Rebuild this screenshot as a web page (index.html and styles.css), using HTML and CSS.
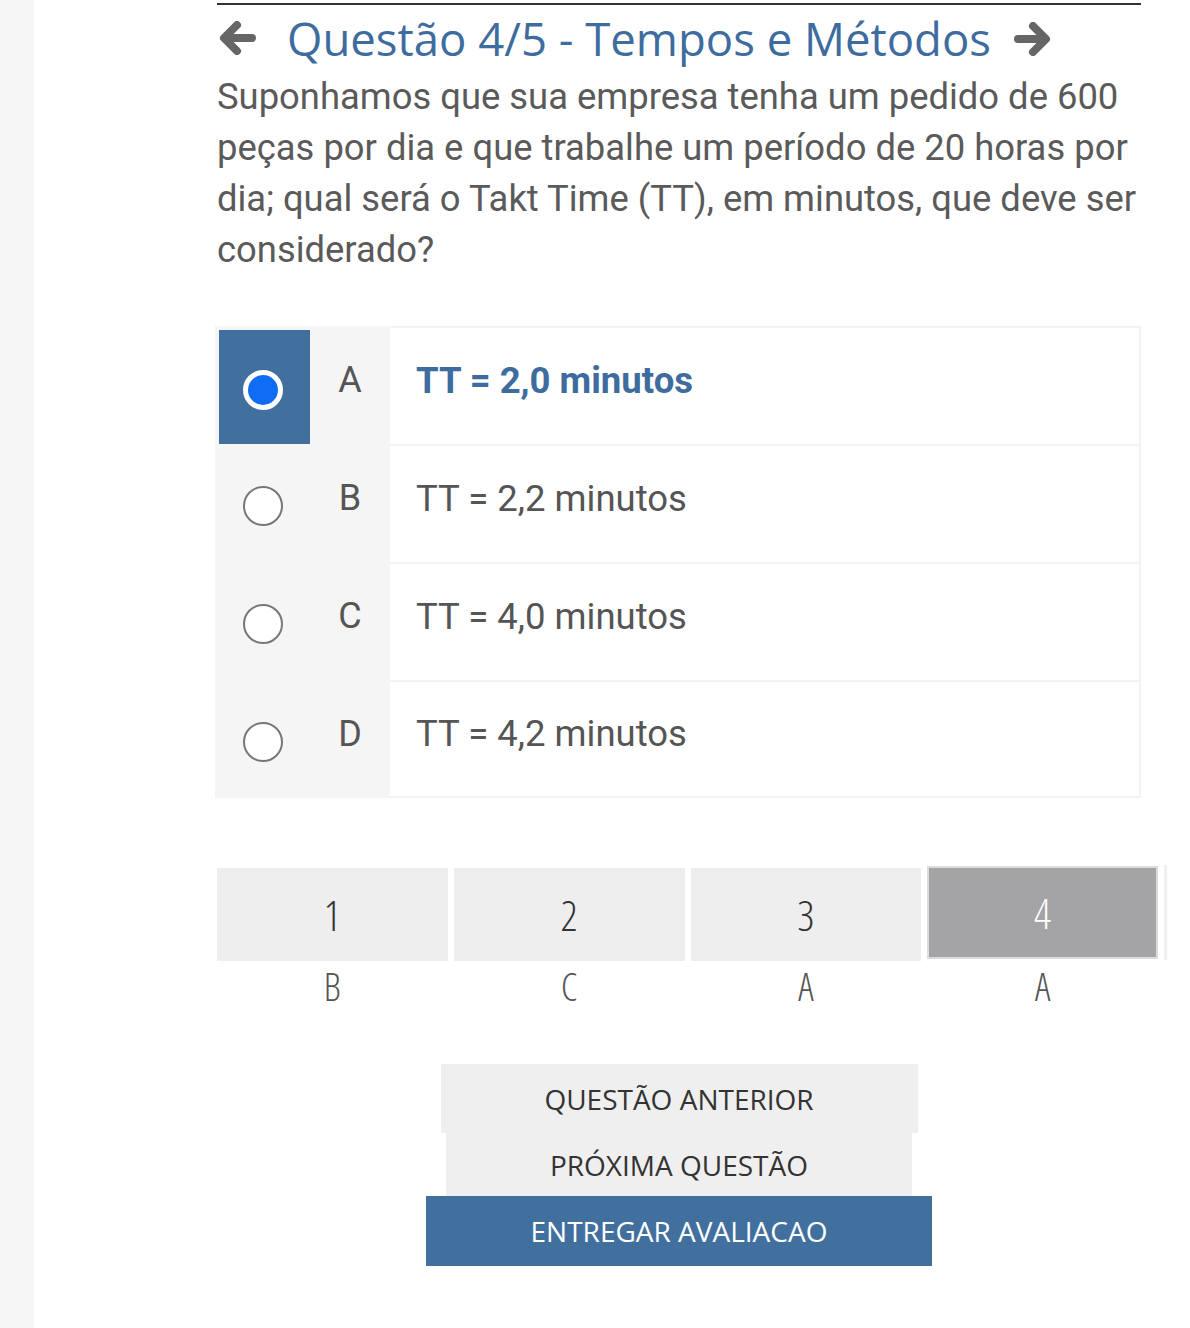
FILE: index.html
```html
<!DOCTYPE html>
<html lang="pt-BR">
<head>
<meta charset="utf-8">
<title>Questão 4/5</title>
<link rel="stylesheet" href="styles.css">
</head>
<body>
<div class="page">
  <aside class="sidebar"></aside>
  <main class="main">
    <div class="topline"></div>
    <header class="title-row">
      <svg class="arrow" viewBox="0 0 40 34" width="40" height="34" aria-hidden="true">
        <path d="M20 4 L7 17 L20 30 M8 17 H35" fill="none" stroke="#666" stroke-width="8" stroke-linecap="round" stroke-linejoin="round"/>
      </svg>
      <h1 class="title">Questão 4/5 - Tempos e Métodos</h1>
      <svg class="arrow" viewBox="0 0 40 34" width="40" height="34" aria-hidden="true">
        <path d="M20 4 L33 17 L20 30 M32 17 H5" fill="none" stroke="#666" stroke-width="8" stroke-linecap="round" stroke-linejoin="round"/>
      </svg>
    </header>
    <p class="question">Suponhamos que sua empresa tenha um pedido de 600 peças por dia e que trabalhe um período de 20 horas por dia; qual será o Takt Time (TT), em minutos, que deve ser considerado?</p>

    <div class="options">
      <div class="option selected">
        <div class="radio-cell"><span class="radio checked"></span></div>
        <div class="letter">A</div>
        <div class="answer">TT = 2,0 minutos</div>
      </div>
      <div class="option">
        <div class="radio-cell"><span class="radio"></span></div>
        <div class="letter">B</div>
        <div class="answer">TT = 2,2 minutos</div>
      </div>
      <div class="option">
        <div class="radio-cell"><span class="radio"></span></div>
        <div class="letter">C</div>
        <div class="answer">TT = 4,0 minutos</div>
      </div>
      <div class="option">
        <div class="radio-cell"><span class="radio"></span></div>
        <div class="letter">D</div>
        <div class="answer">TT = 4,2 minutos</div>
      </div>
    </div>

    <div class="nav-grid">
      <div class="nav-item"><div class="num">1</div><div class="ans">B</div></div>
      <div class="nav-item"><div class="num">2</div><div class="ans">C</div></div>
      <div class="nav-item"><div class="num">3</div><div class="ans">A</div></div>
      <div class="nav-item current"><div class="num">4</div><div class="ans">A</div></div>
      <div class="nav-edge"></div>
    </div>

    <div class="buttons">
      <button class="btn btn-prev">QUESTÃO ANTERIOR</button>
      <button class="btn btn-next">PRÓXIMA QUESTÃO</button>
      <button class="btn btn-submit">ENTREGAR AVALIACAO</button>
    </div>
  </main>
</div>
</body>
</html>
```

FILE: styles.css
```css
html, body {
  margin: 0;
  padding: 0;
  background: #ffffff;
}

.page {
  display: flex;
  min-height: 1328px;
}

.sidebar {
  width: 34px;
  flex: none;
  background: #f6f6f6;
}

.main {
  width: 924px;
  padding-left: 183px;
  font-family: Roboto, "Noto Sans", sans-serif;
}

.topline {
  margin-top: 3px;
  border-top: 2px solid #333;
}

.title-row {
  display: flex;
  align-items: center;
  height: 66px;
}

.arrow {
  flex: none;
}

.title-row .arrow:first-child {
  margin-right: 30px;
}

.title-row .arrow:last-child {
  margin-left: 22px;
  margin-top: 2px;
}

.title {
  margin: 0;
  font-family: "Open Sans", sans-serif;
  font-weight: 400;
  font-size: 45.5px;
  line-height: 66px;
  color: #3e6c9e;
  white-space: nowrap;
}

.question {
  margin: 0;
  font-size: 36.4px;
  line-height: 51px;
  color: #5a5a5a;
}

.options {
  margin-top: 51px;
  margin-left: -2px;
  width: 926px;
  background: #f5f5f5;
}

.option {
  display: flex;
  height: 118px;
}

.radio-cell {
  width: 95px;
  display: flex;
  align-items: center;
  justify-content: center;
  box-sizing: border-box;
  padding-top: 6px;
}

.option.selected .radio-cell {
  background: #41709f;
  margin: 4px 0 0 4px;
  width: 91px;
  padding-top: 6px;
  padding-right: 4px;
}

.radio {
  width: 40px;
  height: 40px;
  border-radius: 50%;
  box-sizing: border-box;
  border: 2px solid #777;
  background: #fff;
}

.radio.checked {
  border: 5px solid #fff;
  background: #0f6cf5;
}

.letter {
  width: 80px;
  display: flex;
  align-items: center;
  justify-content: center;
  font-size: 36px;
  color: #555;
  padding-bottom: 10px;
  box-sizing: border-box;
}

.answer {
  flex: 1;
  background: #fff;
  border-top: 2px solid #f3f3f3;
  border-right: 2px solid #f3f3f3;
  display: flex;
  align-items: center;
  padding-left: 26px;
  padding-bottom: 12px;
  font-size: 36.5px;
  color: #555;
}

.option:last-child .answer {
  border-bottom: 2px solid #f3f3f3;
}

.option.selected .answer {
  font-weight: 700;
  color: #3e6c9e;
}

.nav-grid {
  display: flex;
  gap: 6px;
  margin-top: 70px;
  width: 950px;
}

.nav-item {
  width: 231px;
  font-family: "Open Sans", sans-serif;
  font-stretch: 75%;
  font-weight: 300;
  text-align: center;
}

.num {
  height: 93px;
  background: #eeeeee;
  font-size: 42px;
  line-height: 93px;
  color: #333;
}

.nav-item.current .num {
  height: 89px;
  line-height: 89px;
  margin-top: -2px;
  background: #a4a3a5;
  border: 2px solid #dcdcdc;
  box-sizing: content-box;
  color: #fff;
}

.nav-item.current .ans {
  margin-top: 2px;
}

.ans {
  font-size: 38px;
  line-height: 50px;
  color: #555;
}

.nav-edge {
  width: 3px;
  height: 95px;
  margin-top: -3px;
  background: #f0f0f0;
}

.buttons {
  margin-top: 53px;
  display: flex;
  flex-direction: column;
  align-items: center;
}

.btn {
  display: block;
  border: none;
  margin: 0;
  padding: 0;
  font-family: "Open Sans", sans-serif;
  font-size: 28px;
  color: #333;
  cursor: pointer;
}

.btn-prev {
  width: 477px;
  height: 69px;
  background: #efefef;
}

.btn-next {
  width: 466px;
  height: 63px;
  background: #efefef;
}

.btn-submit {
  width: 506px;
  height: 70px;
  background: #41709f;
  color: #fff;
}
```
